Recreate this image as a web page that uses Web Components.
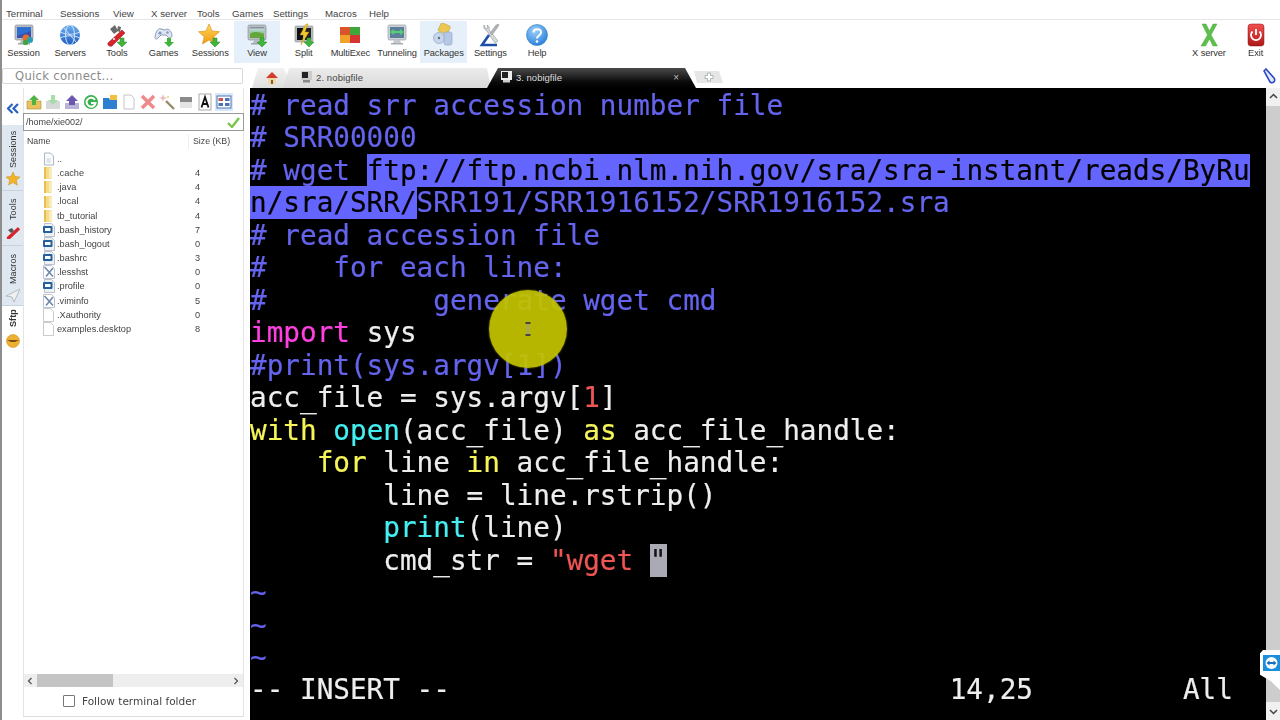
<!DOCTYPE html>
<html><head><meta charset="utf-8"><title>MobaXterm</title>
<style>
html,body{margin:0;padding:0;background:#fff;height:720px;overflow:hidden}
body{font-family:"Liberation Sans",Arial,sans-serif;color:#333}
</style></head><body>
<mx-app>
  <mx-menu slot="menu">
    <mx-mi w="54" style="--x:6px">Terminal</mx-mi><mx-mi w="53">Sessions</mx-mi><mx-mi w="38">View</mx-mi><mx-mi w="46">X server</mx-mi><mx-mi w="35">Tools</mx-mi><mx-mi w="41">Games</mx-mi><mx-mi w="52">Settings</mx-mi><mx-mi w="44">Macros</mx-mi><mx-mi w="30">Help</mx-mi>
  </mx-menu>
  <mx-toolbar slot="toolbar">
    <mx-tool icon="session">Session</mx-tool><mx-tool icon="servers">Servers</mx-tool><mx-tool icon="tools">Tools</mx-tool><mx-tool icon="games">Games</mx-tool><mx-tool icon="sessions">Sessions</mx-tool><mx-tool icon="view" active>View</mx-tool><mx-tool icon="split">Split</mx-tool><mx-tool icon="multi">MultiExec</mx-tool><mx-tool icon="tunnel">Tunneling</mx-tool><mx-tool icon="packages" active>Packages</mx-tool><mx-tool icon="settings">Settings</mx-tool><mx-tool icon="help">Help</mx-tool>
    <mx-tool slot="right" icon="xserver">X server</mx-tool><mx-tool slot="right" icon="exit">Exit</mx-tool>
  </mx-toolbar>
  <mx-tabrow slot="tabs">
    <mx-tab kind="home"></mx-tab>
    <mx-tab kind="idle">2. nobigfile</mx-tab>
    <mx-tab kind="active">3. nobigfile</mx-tab>
    <mx-tab kind="add"></mx-tab>
  </mx-tabrow>
  <mx-sidetabs slot="side"></mx-sidetabs>
  <mx-sftp slot="sftp">
    <mx-file icon="up" size="">..</mx-file>
    <mx-file icon="folder" size="4">.cache</mx-file>
    <mx-file icon="folder" size="4">.java</mx-file>
    <mx-file icon="folder" size="4">.local</mx-file>
    <mx-file icon="folder" size="4">tb_tutorial</mx-file>
    <mx-file icon="shell" size="7">.bash_history</mx-file>
    <mx-file icon="shell" size="0">.bash_logout</mx-file>
    <mx-file icon="shell" size="3">.bashrc</mx-file>
    <mx-file icon="tool" size="0">.lesshst</mx-file>
    <mx-file icon="shell" size="0">.profile</mx-file>
    <mx-file icon="tool" size="5">.viminfo</mx-file>
    <mx-file icon="blank" size="0">.Xauthority</mx-file>
    <mx-file icon="blank" size="8">examples.desktop</mx-file>
  </mx-sftp>
  <mx-term slot="term">
    <mx-line><i class="c"># read srr accession number file</i></mx-line>
    <mx-line><i class="c"># SRR00000</i></mx-line>
    <mx-line><i class="c"># wget </i><i class="s">ftp://ftp.ncbi.nlm.nih.gov/sra/sra-instant/reads/ByRu</i></mx-line>
    <mx-line><i class="s">n/sra/SRR/</i><i class="c">SRR191/SRR1916152/SRR1916152.sra</i></mx-line>
    <mx-line><i class="c"># read accession file</i></mx-line>
    <mx-line><i class="c">#    for each line:</i></mx-line>
    <mx-line><i class="c">#          generate wget cmd</i></mx-line>
    <mx-line><i class="m">import</i> sys</mx-line>
    <mx-line><i class="c">#print(sys.argv[1])</i></mx-line>
    <mx-line>acc_file = sys.argv[<i class="r">1</i>]</mx-line>
    <mx-line><i class="y">with</i> <i class="k">open</i>(acc_file) <i class="y">as</i> acc_file_handle:</mx-line>
    <mx-line>    <i class="y">for</i> line <i class="y">in</i> acc_file_handle:</mx-line>
    <mx-line>        line = line.rstrip()</mx-line>
    <mx-line>        <i class="k">print</i>(line)</mx-line>
    <mx-line>        cmd_str = <i class="r">"wget </i><i class="u">"</i></mx-line>
    <mx-line><i class="c">~</i></mx-line>
    <mx-line><i class="c">~</i></mx-line>
    <mx-line><i class="c">~</i></mx-line>
    <mx-line>-- INSERT --                              14,25         All</mx-line>
  </mx-term>
  <mx-vscroll slot="scroll"></mx-vscroll>
</mx-app>
<script>
const grad=(id,a,b)=>`<linearGradient id="${id}" x1="0" y1="0" x2="0" y2="1"><stop offset="0" stop-color="${a}"/><stop offset="1" stop-color="${b}"/></linearGradient>`;
const arrow=`<path d="M15 15h4v4h3l-5 5-5-5h3z" fill="#3fb53c" stroke="#2a8a2a" stroke-width=".5"/>`;
const monitor=(fill)=>`<rect x="3" y="2" width="18" height="15" rx="1.5" fill="#b9bec4" stroke="#8d9298" stroke-width=".7"/><rect x="5" y="4" width="14" height="11" fill="${fill}"/><path d="M9 17h6l1 3H8z" fill="#b8bcc0"/><rect x="6" y="20" width="12" height="1.5" fill="#9da2a8"/>`;
const ICONS={
session:`${monitor('#3b4db0')}<path d="M5 4h14v4L5 13z" fill="#2f6fd0"/><circle cx="14" cy="15" r="3.5" fill="#e0702a"/><circle cx="18" cy="17" r="3" fill="#28a0b0"/><circle cx="13.5" cy="19.5" r="2.6" fill="#37a83a"/>`,
servers:`<defs>${grad('g1','#6fb0f0','#1d5cc0')}</defs><circle cx="12" cy="12" r="10" fill="url(#g1)"/><g fill="none" stroke="#cfe4fa" stroke-width="1"><ellipse cx="12" cy="12" rx="4.5" ry="10"/><path d="M2.5 9c5 3 14 3 19 0M2.5 15c5-3 14-3 19 0M5 4l14 16"/></g>`,
tools:`<path d="M5 6l5-4 3 6-4 3zM13 3l3 1-1 5-3-1z" fill="#6a6a6a"/><path d="M3 20L17 7l3 3-13 13c-2 1-5-1-4-3z" fill="#d6252c" stroke="#8a1014" stroke-width=".5"/><circle cx="9" cy="16" r="1" fill="#fff"/>${arrow}`,
games:`<path d="M3 14C4 7 7 5 9 6l4 1c3-2 6 0 7 5 0 3-2 4-4 2l-2-2H9l-3 3c-2 2-3 1-3-1z" fill="#dfe6f2" stroke="#8a9cbc" stroke-width="1"/><circle cx="8" cy="10" r="1.6" fill="#7e96c8"/><circle cx="15.5" cy="9.5" r="1.2" fill="#7e96c8"/><path d="M15 15h4v4h3l-5 5-5-5h3z" fill="#3fb53c"/>`,
sessions:`<defs>${grad('g2','#ffd95a','#ef9a12')}</defs><path d="M11 1l3 7 7.500 .7-5.700 5 1.700 7.300L11 17l-6.500 4 1.700-7.300-5.700-5L8 8z" fill="url(#g2)" stroke="#d88a10" stroke-width=".6"/>${arrow}`,
view:`<defs>${grad('g3','#cfe6f8','#5aa83c')}</defs>${monitor('url(#g3)')}<path d="M5 11c4-3 9-2 14 0v4H5z" fill="#62a63c"/><rect x="5" y="4" width="14" height="1.500" fill="#8a9098"/>${arrow}`,
split:`<rect x="3" y="3" width="18" height="16" rx="1" fill="#b8bcc0" stroke="#8d9298" stroke-width=".6"/><rect x="5" y="5" width="6" height="12" fill="#111"/><rect x="13" y="5" width="6" height="12" fill="#222"/><path d="M14 1l-6 11h4l-3 10 8-13h-4l3-8z" fill="#f3c72e" stroke="#b68b10" stroke-width=".4"/>${arrow}`,
multi:`<rect x="2" y="4" width="10" height="8" fill="#d9532b"/><rect x="12" y="4" width="10" height="8" fill="#3fa63a"/><rect x="2" y="12" width="10" height="8" fill="#f0a12a"/><rect x="12" y="12" width="10" height="8" fill="#d63333"/>`,
tunnel:`<rect x="3" y="2" width="18" height="15" rx="1.500" fill="#cdd2d8" stroke="#999ea4" stroke-width=".7"/><rect x="5" y="4" width="14" height="11" fill="#5d7f9a"/><path d="M5 9l4-3v2h6V6l4 3-4 3v-2H9v2z" fill="#55d070"/><path d="M9 17h6l1 3H8z" fill="#c5c9cd"/><rect x="6" y="20" width="12" height="1.500" fill="#a8adb2"/>`,
packages:`<rect x="7" y="1" width="10" height="9" rx="1" transform="rotate(25 12 6)" fill="#ecc850" stroke="#b89a30" stroke-width=".5"/><circle cx="7" cy="15" r="5.500" fill="#c8d6ec" stroke="#8ea2c4" stroke-width=".7"/><circle cx="7" cy="15" r="1.200" fill="#5b6e90"/><rect x="12" y="9" width="8" height="13" rx="2" fill="#b6c8e6" stroke="#8ea2c4" stroke-width=".6"/>`,
settings:`<path d="M6 2c-1 3 1 5 3 6l8 12 3-2-9-11c1-2 0-4-2-5l1 3-2 1z" fill="#d8dade" stroke="#8a8e94" stroke-width=".6"/><path d="M18 2l-6 8 2 2 6-8 1-3z" fill="#aeb2b8" stroke="#85898f" stroke-width=".4"/><path d="M11 12L4 22h15" fill="none" stroke="#1d4fa8" stroke-width="2.600"/>`,
help:`<defs><radialGradient id="g4" cx=".4" cy=".3" r=".8"><stop offset="0" stop-color="#9fd2fa"/><stop offset="1" stop-color="#1c78d8"/></radialGradient></defs><circle cx="12" cy="12" r="10.500" fill="url(#g4)" stroke="#2a74c0" stroke-width=".6"/><path d="M8.500 9.500c0-4.500 7.500-4.500 7.500 0 0 3-4 3-4 6" fill="none" stroke="#fff" stroke-width="2"/><circle cx="12" cy="18.500" r="1.300" fill="#fff"/>`,
xserver:`<path d="M5 1h4l3.500 7L16 1h4l-6 11 6.500 11h-4.500L12.500 16 8.500 23H4l6.500-11z" fill="#5cc04a" stroke="#3a9a32" stroke-width=".4"/>`,
exit:`<defs>${grad('g5','#f05050','#b01818')}</defs><rect x="4" y="1" width="16" height="22" rx="3" fill="url(#g5)" stroke="#8a1010" stroke-width=".5"/><path d="M8.500 8.500a5 5 0 1 0 7 0" fill="none" stroke="#fff" stroke-width="1.800"/><path d="M12 6v6" stroke="#fff" stroke-width="1.800"/>`
};
const FILE={
folder:`<path d="M1 1h7.500v12H1z" fill="#f4dc8c"/><path d="M1 1h2v12H1z" fill="#e8bf48"/><path d="M6 2h2.500v10H6z" fill="#f9ecb8"/>`,
up:`<path d="M1.500 1h6l3 3v9h-9z" fill="#fafafa" stroke="#9aa3b5" stroke-width=".8"/><path d="M3.500 6h4v5h-4z" fill="#dfe5ef"/>`,
blank:`<path d="M.5 .5h7l3 3v10H.5z" fill="#fff" stroke="#bdbdbd" stroke-width=".8"/>`,
shell:`<path d="M1.500 .5h7l3 3v10h-10z" fill="#eef1f6" stroke="#aab2c2" stroke-width=".8"/><rect x="0" y="3" width="9.500" height="7" rx="1" fill="#24609e"/><rect x="2" y="5" width="5.500" height="3" fill="#fff"/>`,
tool:`<path d="M.5 .5h8l3 3v10H.5z" fill="#fff" stroke="#aeb4bf" stroke-width=".8"/><path d="M1.500 2l8.500 9.500M10 3L3 11.500" stroke="#6f89ad" stroke-width="1.600"/>`
};
const SFTP=[
`<path d="M2 8h14v8H2z" fill="#e7c25e" stroke="#b08e30" stroke-width=".6"/><path d="M9 2l5 5h-3v5H7V7H4z" fill="#4fb540"/>`,
`<path d="M2 8h14v8H2z" fill="#d6d8da"/><path d="M7 2h4v5h3l-5 5-5-5h3z" fill="#a8dca8"/>`,
`<path d="M2 10h14v6H2z" fill="#b8b4d8"/><path d="M9 2l6 6h-3v4H6V8H3z" fill="#6a58b0"/>`,
`<circle cx="9" cy="9" r="7" fill="#36b04a"/><path d="M13 7a4.500 4.500 0 1 0 .5 3H9" fill="none" stroke="#fff" stroke-width="2"/>`,
`<path d="M2 5h6l1 2h7v9H2z" fill="#2f7fd0"/><rect x="9" y="2" width="7" height="5" fill="#f0c040"/>`,
`<path d="M4 2h7l3 3v11H4z" fill="#fff" stroke="#c4c4c4"/>`,
`<path d="M3 3l12 12M15 3L3 15" stroke="#ef8a8a" stroke-width="3.500"/>`,
`<path d="M8 8l8 8" stroke="#9a8a6a" stroke-width="2.400"/><path d="M5 1l1 3 3 1-3 1-1 3-1-3-3-1 3-1z" fill="#f0b8c0"/><circle cx="10" cy="4" r="1" fill="#f0d060"/>`,
`<rect x="3" y="4" width="12" height="5" fill="#8a8a8a"/><rect x="3" y="9" width="12" height="6" fill="#e4e4e4"/>`,
`<rect x="3" y="1" width="12" height="16" fill="#fff" stroke="#aaa"/><path d="M5.500 14.500L9 4l3.500 10.500M7 11h4" fill="none" stroke="#111" stroke-width="1.800"/>`,
`<rect x="2" y="3" width="14" height="12" fill="#fff" stroke="#4d72b4"/><rect x="3.500" y="5" width="4.500" height="3" fill="#c9544e"/><rect x="3.500" y="10" width="4.500" height="3" fill="#4d72b4"/><rect x="10" y="5" width="4.500" height="3" fill="#4d72b4"/><rect x="10" y="10" width="4.500" height="3" fill="#4d72b4"/>`
];
function make(name,css,html,after){
  customElements.define(name,class extends HTMLElement{
    constructor(){super();this.attachShadow({mode:'open'});}
    connectedCallback(){this.shadowRoot.innerHTML=`<style>${css}</style>`+html(this);if(after)after(this);}
  });
}
make('mx-app',`:host{display:grid;grid-template-columns:23px 221px 6px 1016px 14px;grid-template-rows:20px 44px 24px 632px;width:1280px;height:720px;overflow:hidden;position:relative;filter:blur(.35px)}
.top{grid-column:1/-1}.tabs{grid-column:1/-1}
.glow{position:absolute;left:489px;top:290px;width:78px;height:78px;border-radius:50%;background:rgba(196,196,0,.93);box-shadow:0 0 2px rgba(196,196,0,.7)}
.beam{position:absolute;left:525px;top:322px;width:6px;height:14px}
.tv{position:absolute;left:1260px;top:650px;width:20px;height:40px;background:#fff;clip-path:polygon(15% 0,100% 0,100% 100%,55% 78%,0 62%,0 8%)}
.tvi{position:absolute;left:1263px;top:655px;width:17px;height:16px}
.lb{position:absolute;left:0;top:0;bottom:0;width:1.500px;background:#8e8e8e}
`,()=>`<div class="top"><slot name="menu"></slot></div><div class="top"><slot name="toolbar"></slot></div><div class="tabs"><slot name="tabs"></slot></div><slot name="side"></slot><slot name="sftp"></slot><div></div><slot name="term"></slot><slot name="scroll"></slot>
<div class="lb"></div>
<div class="glow"></div>
<svg class="beam" viewBox="0 0 6 14"><path d="M.5 1h5M.5 13h5M3 1v12" stroke="#444" stroke-width="1.800" fill="none"/><path d="M3 2v10" stroke="#f0f0e0" stroke-width="1"/></svg>
<div class="tv"></div>
<svg class="tvi" viewBox="0 0 17 16"><rect width="17" height="16" fill="#1a8fe0"/><circle cx="8.500" cy="8" r="6" fill="#fff"/><path d="M3.500 8l3-2.500v1.500h4V5.500l3 2.500-3 2.500V9h-4v1.500z" fill="#1a6fc0"/></svg>`);
make('mx-menu',`:host{display:flex;height:20px;align-items:center;padding-left:6px;padding-top:7px;box-sizing:border-box;border-bottom:1px solid #e6e6e6;background:#fff}`,()=>`<slot></slot>`);
make('mx-mi',`:host{display:block;font-size:9.700px;color:#444;white-space:nowrap}`,el=>{el.style.width=el.getAttribute('w')+'px';return `<slot></slot>`});
make('mx-toolbar',`:host{display:flex;height:44px;background:#fff;padding-left:.200px;box-sizing:border-box}
.l{display:flex}.r{display:flex;margin-left:auto;padding-right:1px}`,()=>`<div class="l"><slot></slot></div><div class="r"><slot name="right"></slot></div>`);
make('mx-tool',`:host{display:flex;flex-direction:column;align-items:center;width:46.700px;height:42px;margin-top:1px;box-sizing:border-box;padding-top:2px;font-size:9.300px;color:#333;letter-spacing:-.1px}
:host([active]){background:#e6f0fa}
svg{width:24px;height:24px;display:block}
span{margin-top:1px;white-space:nowrap;line-height:11px}`,el=>`<svg viewBox="0 0 24 24">${ICONS[el.getAttribute('icon')]}</svg><span><slot></slot></span>`);
make('mx-tabrow',`:host{display:flex;height:24px;align-items:flex-end;position:relative;background:#fff}
.q{width:241px;height:16px;box-sizing:border-box;margin:0 9px 4px 2px;border:1px solid #d8d8d8;border-radius:2px;background:#fff;line-height:14px;color:#8a8a8a;padding-left:12px;letter-spacing:.3px;font-family:"DejaVu Sans",sans-serif;font-size:11.600px}
.clip{width:14px;height:16px;margin:0 4px 4px auto}`,()=>`<div class="q">Quick connect...</div><slot></slot><svg class="clip" viewBox="0 0 14 16"><path d="M2 3L4 1l8 9c2 3-1 6-4 4z" fill="#dfe8fb" stroke="#2b49c0" stroke-width="1.600"/></svg>`);
make('mx-tab',`:host{display:flex;align-items:center;box-sizing:border-box;height:20px;font-size:9.500px;white-space:nowrap;padding-bottom:2px}
:host([kind=home]){width:40px;margin-right:-9px;background:linear-gradient(#f2f2f2,#dfdfdf);clip-path:polygon(0 100%,6px 0,32px 0,40px 100%);justify-content:center}
:host([kind=idle]){width:208px;padding-left:17px;color:#444;background:linear-gradient(#ececec,#d9d9d9);clip-path:polygon(0 100%,6px 0,204px 0,208px 100%);margin-right:-4px;letter-spacing:.1px}
:host([kind=active]){width:209px;padding-left:13px;color:#ddd;background:linear-gradient(#4a4a4a,#0a0a0a 70%,#000);clip-path:polygon(0 100%,11px 0,198px 0,209px 100%);margin-right:-2px}
:host([kind=add]){width:29px;height:12px;margin-bottom:5px;padding:0;background:#e6e6e6;clip-path:polygon(0 0,25px 0,29px 100%,3px 100%);justify-content:center}
svg{margin-right:3px;flex:none}
:host([kind=add]) svg,:host([kind=home]) svg{margin:0}
.x{margin-left:auto;margin-right:17px;color:#bbb;font-size:10px}`,el=>{
 const k=el.getAttribute('kind');
 if(k==='home')return `<svg width="14" height="13" viewBox="0 0 14 13"><path d="M1 7l6-6 6 6z" fill="#d33c2a"/><rect x="3" y="7" width="8" height="6" fill="#f0d9a8"/><rect x="6" y="9" width="2" height="4" fill="#8a5a2a"/></svg>`;
 if(k==='add')return `<svg width="10" height="10" viewBox="0 0 10 10"><path d="M3.500 1h3v2.500H9v3H6.500V9h-3V6.500H1v-3h2.500z" fill="#fff" stroke="#9aa" stroke-width=".8"/></svg>`;
 const icon=`<svg width="13" height="12" viewBox="0 0 13 12"><rect x="1" y="0" width="11" height="9" fill="${k==='active'?'#eee':'#ccc'}"/><rect x="2" y="1" width="6" height="6" fill="#222"/><rect x="3" y="9" width="7" height="2.500" fill="${k==='active'?'#ccc':'#888'}"/></svg>`;
 return icon+`<slot></slot>`+(k==='active'?`<span class="x">×</span>`:'');
});
const VT=[['Sessions',66,4,4,`<path d="M7 0l2 4.500 5 .5-3.700 3.200 1 5L7 10.500 2.700 13l1-5L0 5l5-.5z" fill="#f2b32a" stroke="#c98a10" stroke-width=".5"/>`],['Tools',55,6,5,`<path d="M1 12L12 2l2 2.500L4 14c-2 1-4 0-3-2z" fill="#d4262c"/><path d="M2 5l4-2 2 3-3 2z" fill="#555"/>`],['Macros',60,3,4,`<path d="M14 1L0 8l6 1 2 5z" fill="#eef0f2" stroke="#aab0b4" stroke-width=".8"/>`],['Sftp',46,4,7,`<circle cx="7" cy="7" r="6.500" fill="#eeb030" stroke="#c88410" stroke-width=".5"/><path d="M1 6h12l-4 2H5z" fill="#7a4a18"/>`]];
make('mx-sidetabs',`:host{display:flex;flex-direction:column;padding-left:2px;padding-top:37px;box-sizing:border-box;height:632px;width:22px;position:relative;background:#fff}
.c{position:absolute;left:7px;top:15px;width:12px;height:11px}
.t{display:flex;flex-direction:column;align-items:center;box-sizing:border-box;background:#dfe8f1;border-bottom:1px solid #c8d2dc;margin-right:1px;width:21px}
.t:last-child{background:#fff;font-weight:bold;border:0;color:#222}
.l{writing-mode:vertical-rl;transform:rotate(180deg);font-size:9px;line-height:12px;letter-spacing:.1px;color:#333;flex:1;min-height:0;font-family:"Liberation Sans",sans-serif;text-align:left}
svg.i{width:14px;height:14px;flex:none}`,()=>`<svg class="c" viewBox="0 0 12 11"><path d="M5.500 1L1 5.500 5.500 10M11 1L6.500 5.500 11 10" fill="none" stroke="#2a60c0" stroke-width="2.200"/></svg>`+VT.map(([n,h,pb,g,s])=>`<div class="t" style="height:${h}px;padding-bottom:${pb}px"><div class="l">${n}</div><svg class="i" style="margin-top:${g}px" viewBox="0 0 14 14">${s}</svg></div>`).join(''));
make('mx-sftp',`:host{display:flex;flex-direction:column;height:629px;box-sizing:border-box;width:221px;border-left:1px solid #e4e4e4;border-right:1px solid #e4e4e4;border-bottom:1px solid #ddd;background:#fff;font-size:9.500px;color:#444}
.bar{display:flex;height:25px;padding:5px 0 0 1px;box-sizing:border-box;gap:1px;align-items:flex-start}
.bar svg{width:18px;height:18px;display:block}
.on{background:#d8e8f8}
.path{height:18px;box-sizing:border-box;border:1px solid #9a9a9a;display:flex;align-items:center;padding:0 3px 0 2px;font-size:9px;color:#444;justify-content:space-between;margin-right:-1px;margin-left:-1px}
.path svg{width:13px;height:11px}
.head{display:grid;grid-template-columns:164px 1fr;height:15px;margin-top:3px;line-height:15px;font-size:8.800px}
.head span:first-child{padding-left:3px}.head span:last-child{padding-left:4px;border-left:1px solid #eee}
.list{flex:1;padding-top:3px}
.hs{height:13px;background:#eeeeee;display:flex;align-items:center;font-size:0}
.hs b{width:76px;height:13px;background:#c4c4c4;margin-left:13px}
.hs svg{width:6px;height:8px;margin-left:3px;position:relative}
.hs svg.rt{margin-left:auto;margin-right:4px}
.hs svg.lf{margin:0 -9px 0 3px}
.fw{height:29px;display:flex;align-items:center;padding-left:39px;font-family:"DejaVu Sans",sans-serif;font-size:10.500px;gap:7px;color:#444;padding-bottom:1px;box-sizing:border-box}
.cb{width:10px;height:10px;border:1px solid #777;border-radius:1px;background:#fff}`,()=>`<div class="bar">${SFTP.map((s,i)=>`<svg class="${i==10?'on':''}" viewBox="0 0 18 18">${s}</svg>`).join('')}</div>
<div class="path"><span>/home/xie002/</span><svg viewBox="0 0 13 11"><path d="M1 6l4 4 7-9" fill="none" stroke="#7cc44a" stroke-width="2.400"/></svg></div>
<div class="head"><span>Name</span><span>Size (KB)</span></div>
<div class="list"><slot></slot></div>
<div class="hs"><svg class="lf" viewBox="0 0 6 8"><path d="M4.500 1L1.500 4l3 3" fill="none" stroke="#555" stroke-width="1.300"/></svg><b></b><svg class="rt" viewBox="0 0 6 8"><path d="M1.500 1l3 3-3 3" fill="none" stroke="#555" stroke-width="1.300"/></svg></div>
<div class="fw"><div class="cb"></div><span>Follow terminal folder</span></div>`);
make('mx-file',`:host{display:grid;grid-template-columns:19px 12px 140px 1fr;height:14.170px;line-height:14.170px;font-size:9.200px;color:#444;align-items:center}
svg{width:12px;height:14px;display:block;grid-column:2}
.n{padding-left:2px}`,el=>`<svg viewBox="0 0 12 14">${FILE[el.getAttribute('icon')]}</svg><span class="n"><slot></slot></span><span class="s">${el.getAttribute('size')}</span>`);
make('mx-term',`:host{display:block;height:632px;background:#000;padding-top:2px;box-sizing:border-box;overflow:hidden}`,()=>`<slot></slot>`);
make('mx-line',`:host{display:block;height:32.470px;line-height:32.470px;font-family:"DejaVu Sans Mono",monospace;font-size:27.680px;color:#eee;white-space:pre;-webkit-text-stroke:.2px currentColor}
`,el=>{
 el.querySelectorAll('i').forEach(i=>{const m={c:'#6464ee',s:'#000',m:'#ff40e0',r:'#ef5555',y:'#f5f55a',k:'#45eef0',u:'#111'};i.style.cssText=`font-style:normal;color:${m[i.className]};`+(i.className==='s'?'background:#6464ff;':'')+(i.className==='u'?'background:#aaaab4;':'');});
 return `<slot></slot>`;
});
make('mx-vscroll',`:host{display:flex;flex-direction:column;height:632px;width:14px;background:#f0f0f0;align-items:center;box-sizing:border-box}
svg{width:9px;height:6px;flex:none;margin:5px 0}
b{flex:1;width:100%;background:#cdcdcd;margin:2px 0}`,()=>`<svg viewBox="0 0 9 6"><path d="M1 5l3.500-3.500L8 5" fill="none" stroke="#444" stroke-width="1.500"/></svg><b></b><svg viewBox="0 0 9 6"><path d="M1 1l3.500 3.500L8 1" fill="none" stroke="#444" stroke-width="1.500"/></svg>`);
</script>
</body></html>
